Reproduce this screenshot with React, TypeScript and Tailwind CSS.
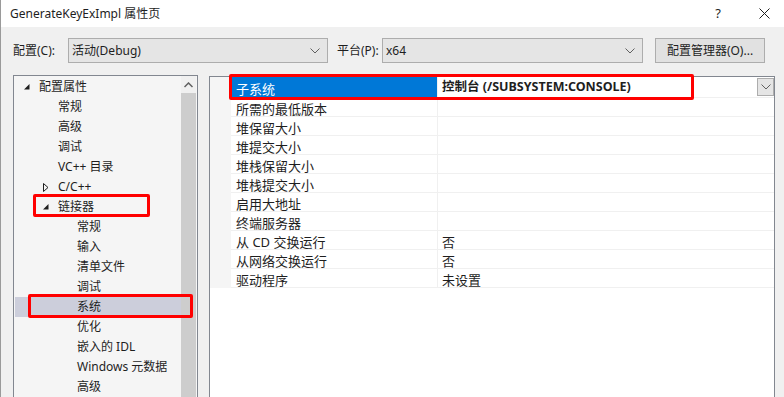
import React from 'react';

const FONT = { fontFamily: '"Noto Sans", "Noto Sans CJK SC", sans-serif' };

function Chevron({ className = '' }: { className?: string }) {
  return (
    <svg width="10" height="6" viewBox="0 0 10 6" className={className}>
      <polyline points="0.5,0.5 5,5 9.5,0.5" fill="none" stroke="#606060" strokeWidth="1" />
    </svg>
  );
}

function Select({ value, className }: { value: string; className: string }) {
  return (
    <div className={`h-[25px] border border-[#adadad] bg-[#e5e5e5] flex items-center justify-between pl-[3px] pr-[7px] text-[12px] text-[#1e1e1e] ${className}`}>
      <span>{value}</span>
      <Chevron />
    </div>
  );
}

type TreeItem = { label: string; level: 0 | 1 | 2; arrow?: 'open' | 'closed'; selected?: boolean };

const tree: TreeItem[] = [
  { label: '配置属性', level: 0, arrow: 'open' },
  { label: '常规', level: 1 },
  { label: '高级', level: 1 },
  { label: '调试', level: 1 },
  { label: 'VC++ 目录', level: 1 },
  { label: 'C/C++', level: 1, arrow: 'closed' },
  { label: '链接器', level: 1, arrow: 'open' },
  { label: '常规', level: 2 },
  { label: '输入', level: 2 },
  { label: '清单文件', level: 2 },
  { label: '调试', level: 2 },
  { label: '系统', level: 2, selected: true },
  { label: '优化', level: 2 },
  { label: '嵌入的 IDL', level: 2 },
  { label: 'Windows 元数据', level: 2 },
  { label: '高级', level: 2 },
];

const props: [string, string][] = [
  ['子系统', '控制台 (/SUBSYSTEM:CONSOLE)'],
  ['所需的最低版本', ''],
  ['堆保留大小', ''],
  ['堆提交大小', ''],
  ['堆栈保留大小', ''],
  ['堆栈提交大小', ''],
  ['启用大地址', ''],
  ['终端服务器', ''],
  ['从 CD 交换运行', '否'],
  ['从网络交换运行', '否'],
  ['驱动程序', '未设置'],
];

function Arrow({ kind }: { kind: 'open' | 'closed' }) {
  if (kind === 'open') {
    return (
      <svg width="6" height="6" viewBox="0 0 6 6">
        <polygon points="5.5,0 5.5,5.5 0,5.5" fill="#1e1e1e" />
      </svg>
    );
  }
  return (
    <svg width="6" height="9" viewBox="0 0 6 9">
      <polygon points="0.5,0.5 5,4.5 0.5,8.5" fill="none" stroke="#1e1e1e" strokeWidth="1" />
    </svg>
  );
}

export default function App() {
  const indent = { 0: 'pl-[9px]', 1: 'pl-[28px]', 2: 'pl-[47px]' } as const;
  return (
    <div className="relative w-[784px] h-[397px] overflow-hidden bg-[#f0f0f0] border-l border-[#9a9a9a] text-[#1e1e1e]" style={FONT}>
      {/* title bar */}
      <div className="h-[27px] bg-white flex items-center pl-[9px] pr-[14px] text-[12px]">
        <span className="flex-1">GenerateKeyExImpl 属性页</span>
        <span className="text-[13px] mr-[38px]">?</span>
        <svg width="11" height="11" viewBox="0 0 11 11">
          <path d="M0.5 0.5 L10.5 10.5 M10.5 0.5 L0.5 10.5" stroke="#1e1e1e" strokeWidth="1" />
        </svg>
      </div>

      {/* toolbar */}
      <div className="flex items-center h-[25px] mt-[11px] text-[12px]">
        <span className="w-[67px] pl-[12px]">配置(C):</span>
        <Select value="活动(Debug)" className="w-[260px]" />
        <span className="w-[54px] pl-[9px]">平台(P):</span>
        <Select value="x64" className="w-[261px]" />
        <div className="ml-[12px] w-[110px] h-[25px] border border-[#adadad] bg-[#e1e1e1] flex items-center justify-center">
          配置管理器(O)...
        </div>
      </div>

      {/* panels */}
      <div className="flex mt-[12px] pl-[12px] gap-[11px] h-[400px]">
        {/* tree */}
        <div className="w-[185px] border border-[#828790] bg-[#f5f5f5] flex">
          <div className="flex-1 pt-[1px] pl-[1px] text-[12px] whitespace-nowrap overflow-hidden">
            {tree.map((t, i) => (
              <div key={i} className={`h-[20px] flex items-center ${indent[t.level]} ${t.selected ? 'bg-[#cccedb]' : ''}`}>
                <span className="w-[15px] shrink-0 flex items-center">{t.arrow && <Arrow kind={t.arrow} />}</span>
                <span>{t.label}</span>
              </div>
            ))}
          </div>
          <div className="w-[15px] mr-[1px] flex flex-col">
            <div className="h-[17px] bg-[#f0f0f0] flex items-center justify-center">
              <svg width="9" height="6" viewBox="0 0 9 6">
                <polyline points="0.5,5 4.5,1 8.5,5" fill="none" stroke="#606060" strokeWidth="1.5" />
              </svg>
            </div>
            <div className="flex-1 bg-[#cdcdcd]" />
          </div>
        </div>

        {/* property grid */}
        <div className="w-[566px] mt-[1px] border border-[#828790] bg-white flex flex-col">
          <div className="flex">
            <div className="w-[21px] bg-[#f5f5f5]" />
            <div className="flex-1 text-[13px]">
              {props.map(([k, v], i) => (
                <div key={i} className={`flex border-b border-[#f0f0f0] ${i === 0 ? 'h-[21px]' : 'h-[19px]'}`}>
                  <div className={`w-[207px] pl-[5px] pt-[5px] flex items-center border-r border-[#f0f0f0] ${i === 0 ? 'bg-[#0078d7] text-white' : ''}`}>{k}</div>
                  <div className={`flex-1 pl-[4px] flex items-center justify-between ${i === 0 ? 'font-bold text-[12.5px]' : ''}`}>
                    <span className={i === 0 ? '' : 'pt-[5px]'}>{v}</span>
                    {i === 0 && (
                      <div className="w-[17px] h-[18px] border border-[#adadad] bg-[#e5e5e5] flex items-center justify-center">
                        <Chevron />
                      </div>
                    )}
                  </div>
                </div>
              ))}
            </div>
          </div>
        </div>
      </div>

      {/* annotations */}
      <div className="absolute left-[228px] top-[74px] w-[465px] h-[26px] border-[3px] border-[#ff0000] rounded-[2px]" />
      <div className="absolute left-[32px] top-[194px] w-[117px] h-[23px] border-[3px] border-[#ff0000] rounded-[2px]" />
      <div className="absolute left-[27px] top-[294px] w-[165px] h-[24px] border-[3px] border-[#ff0000] rounded-[2px]" />
    </div>
  );
}
